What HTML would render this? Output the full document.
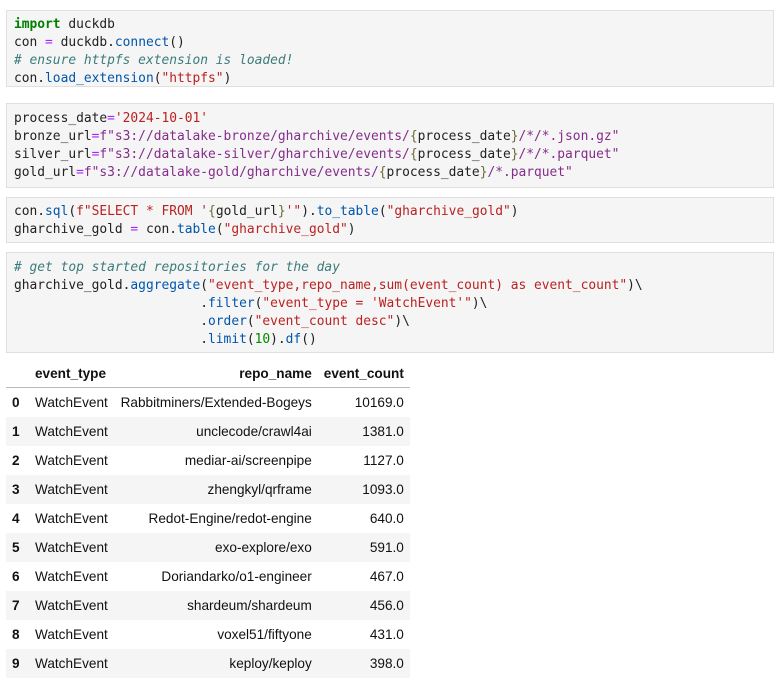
<!DOCTYPE html>
<html><head><meta charset="utf-8"><style>
body{margin:0;background:#fff;width:782px;height:684px;overflow:hidden;position:relative;font-family:"Liberation Sans",sans-serif}
.cell{position:absolute;left:6px;width:768px;background:#f5f5f5;border:1px solid #e0e0e0;box-sizing:border-box;padding:5px 0 0 7px;font-family:"DejaVu Sans Mono","Liberation Mono",monospace;font-size:12.9px;line-height:18px;color:#212121;white-space:pre}
.k{color:#008000;font-weight:bold}.o{color:#aa22ff}.f{color:#0055aa}.s{color:#ba2121}.c{color:#3d7b7b;font-style:italic}.p{color:#842d8a}.b{color:#6b6b3b}.n{color:#008800}
table{position:absolute;left:6px;top:359px;border-collapse:collapse;font-size:13.6px;color:#111}
th{font-weight:bold;height:28px;padding:0 6px;text-align:right;border-bottom:1px solid #bbb}
td{height:29px;padding:0 6px;text-align:right}
td.i{font-weight:bold;text-align:left;padding-left:6px}
td.l,th.l{text-align:left}
tr:nth-child(odd) td{background:#f5f5f5}
</style></head><body>
<div class="cell" style="top:10px;height:77px"><span class="k">import</span> duckdb
con <span class="o">=</span> duckdb<span>.</span><span class="f">connect</span>()
<span class="c"># ensure httpfs extension is loaded!</span>
con.<span class="f">load_extension</span>(<span class="s">"httpfs"</span>)</div>
<div class="cell" style="top:103px;height:85px;padding-top:6px">process_date<span class="o">=</span><span class="s">'2024-10-01'</span>
bronze_url<span class="o">=</span><span class="p">f"s3://datalake-bronze/gharchive/events/</span><span class="b">{</span>process_date<span class="b">}</span><span class="p">/*/*.json.gz"</span>
silver_url<span class="o">=</span><span class="p">f"s3://datalake-silver/gharchive/events/</span><span class="b">{</span>process_date<span class="b">}</span><span class="p">/*/*.parquet"</span>
gold_url<span class="o">=</span><span class="p">f"s3://datalake-gold/gharchive/events/</span><span class="b">{</span>process_date<span class="b">}</span><span class="p">/*.parquet"</span></div>
<div class="cell" style="top:197px;height:46px">con.<span class="f">sql</span>(<span class="s">f"SELECT * FROM '</span><span class="b">{</span>gold_url<span class="b">}</span><span class="s">'"</span>).<span class="f">to_table</span>(<span class="s">"gharchive_gold"</span>)
gharchive_gold <span class="o">=</span> con.<span class="f">table</span>(<span class="s">"gharchive_gold"</span>)</div>
<div class="cell" style="top:252px;height:101px;padding-top:6px"><span class="c"># get top started repositories for the day</span>
gharchive_gold.<span class="f">aggregate</span>(<span class="s">"event_type,repo_name,sum(event_count) as event_count"</span>)\
                        .<span class="f">filter</span>(<span class="s">"event_type = 'WatchEvent'"</span>)\
                        .<span class="f">order</span>(<span class="s">"event_count desc"</span>)\
                        .<span class="f">limit</span>(<span class="n">10</span>).<span class="f">df</span>()</div>
<table>
<tr><th style="width:11px"></th><th class="l">event_type</th><th style="width:192px">repo_name</th><th>event_count</th></tr>
<tr><td class="i">0</td><td class="l">WatchEvent</td><td>Rabbitminers/Extended-Bogeys</td><td>10169.0</td></tr>
<tr><td class="i">1</td><td class="l">WatchEvent</td><td>unclecode/crawl4ai</td><td>1381.0</td></tr>
<tr><td class="i">2</td><td class="l">WatchEvent</td><td>mediar-ai/screenpipe</td><td>1127.0</td></tr>
<tr><td class="i">3</td><td class="l">WatchEvent</td><td>zhengkyl/qrframe</td><td>1093.0</td></tr>
<tr><td class="i">4</td><td class="l">WatchEvent</td><td>Redot-Engine/redot-engine</td><td>640.0</td></tr>
<tr><td class="i">5</td><td class="l">WatchEvent</td><td>exo-explore/exo</td><td>591.0</td></tr>
<tr><td class="i">6</td><td class="l">WatchEvent</td><td>Doriandarko/o1-engineer</td><td>467.0</td></tr>
<tr><td class="i">7</td><td class="l">WatchEvent</td><td>shardeum/shardeum</td><td>456.0</td></tr>
<tr><td class="i">8</td><td class="l">WatchEvent</td><td>voxel51/fiftyone</td><td>431.0</td></tr>
<tr><td class="i">9</td><td class="l">WatchEvent</td><td>keploy/keploy</td><td>398.0</td></tr>
</table>
</body></html>
